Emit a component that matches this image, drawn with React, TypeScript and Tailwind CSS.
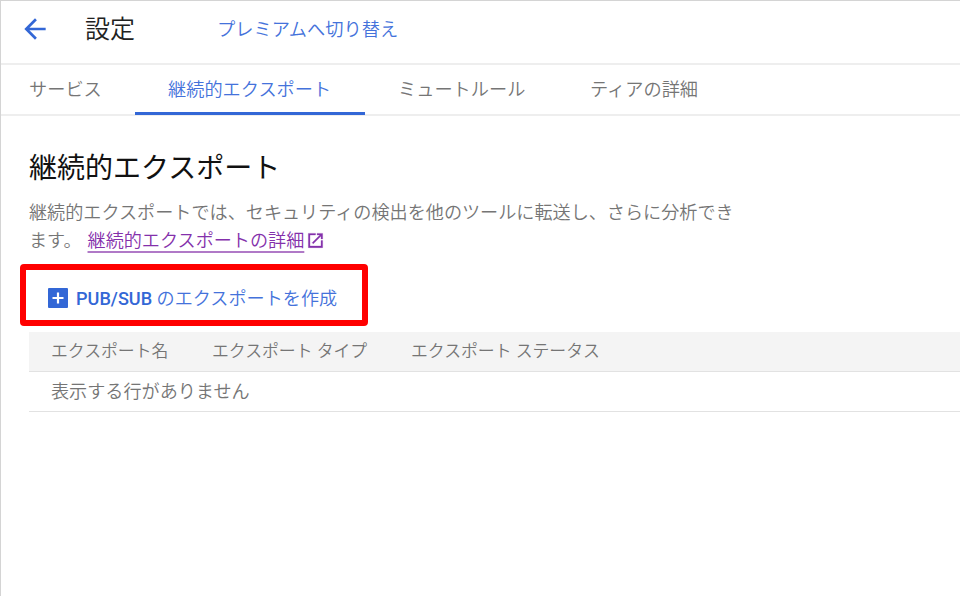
import { ReactNode } from 'react'

interface TabProps {
  children: ReactNode
  active?: boolean
  className?: string
}

function Tab({ children, active = false, className = 'pl-[33px]' }: TabProps) {
  return (
    <button
      className={`h-[50px] shrink-0 whitespace-nowrap border-b-3 pt-[3px] text-left text-[18.2px] ${
        active ? 'border-[#3367d6] text-[#4472db]' : 'border-transparent'
      } ${className}`}
    >
      {children}
    </button>
  )
}

export default function App() {
  return (
    <div className="h-[596px] w-[960px] overflow-hidden border-l border-t border-[#d4d4d4] bg-white font-[Roboto,'Noto_Sans_CJK_JP',sans-serif] text-[18.12px] font-[350] text-[#757575]">
      <header className="flex h-[64px] items-center border-b-2 border-[#eeeeee] pb-[6px] pl-[18px]">
        <svg className="size-8 fill-[#3367d6]" viewBox="0 0 24 24">
          <path d="M20 11H7.83l5.59-5.59L12 4l-8 8 8 8 1.41-1.41L7.83 13H20v-2z" />
        </svg>
        <h1 className="ml-[34px] pt-px text-[25px] text-[#212121]">設定</h1>
        <button className="ml-[82px] pt-px text-[18.25px] text-[#4472db]">プレミアムへ切り替え</button>
      </header>

      <nav className="flex h-[51px] border-b-2 border-[#eeeeee]">
        <Tab className="w-[134px] pl-[28px]">サービス</Tab>
        <Tab active className="w-[230px] pl-[33px]">継続的エクスポート</Tab>
        <Tab className="w-[192px] pl-[33px]">ミュートルール</Tab>
        <Tab>ティアの詳細</Tab>
      </nav>

      <main className="pl-[28px] pt-[33px]">
        <h2 className="text-[28px] font-normal leading-[40px] text-[#111111]">継続的エクスポート</h2>
        <p className="mt-[10px] w-[730px] leading-[28px]">
          継続的エクスポートでは、セキュリティの検出を他のツールに転送し、さらに分析でき
          <br />
          ます。
          <a className="ml-[6px] text-[#8430ab] underline decoration-[#7b1fa2]/60 decoration-2 underline-offset-[4px]">
            継続的エクスポートの詳細
          </a>
          <svg
            className="ml-[2px] inline-block size-[19px] fill-[#8430ab] stroke-[#8430ab] stroke-[0.4] align-[-3px]"
            viewBox="0 0 24 24"
          >
            <path d="M19 19H5V5h7V3H3v18h18v-9h-2v7zM14 3v2h3.59l-9.83 9.83 1.41 1.41L19 6.41V10h2V3h-7z" />
          </svg>
        </p>

        <button className="-ml-[9px] mt-[9px] flex h-[62px] w-[348px] items-center rounded-[4px] border-6 border-[#ff0000] pl-[22px] pt-[6px] text-[#3367d6]">
          <svg className="size-5" viewBox="0 0 20 20">
            <rect width="20" height="20" rx="1" fill="#3367d6" />
            <path d="M10 4.5v11M4.5 10h11" stroke="white" strokeWidth="2.2" />
          </svg>
          <span className="ml-[8px] whitespace-pre pt-px text-[#4472db]">
            <span className="font-medium text-[#3367d6]">PUB/SUB</span> のエクスポートを作成
          </span>
        </button>

        <div className="mt-[6px]">
          <div className="flex h-[40px] items-center border-b border-[#e2e2e2] bg-[#f4f4f4] pl-[22px] pt-px text-[16.85px]">
            <span className="w-[161px]">エクスポート名</span>
            <span className="w-[199px]">エクスポート タイプ</span>
            <span>エクスポート ステータス</span>
          </div>
          <div className="flex h-[40px] items-center border-b border-[#e2e2e2] pl-[22px]">
            表示する行がありません
          </div>
        </div>
      </main>
    </div>
  )
}
